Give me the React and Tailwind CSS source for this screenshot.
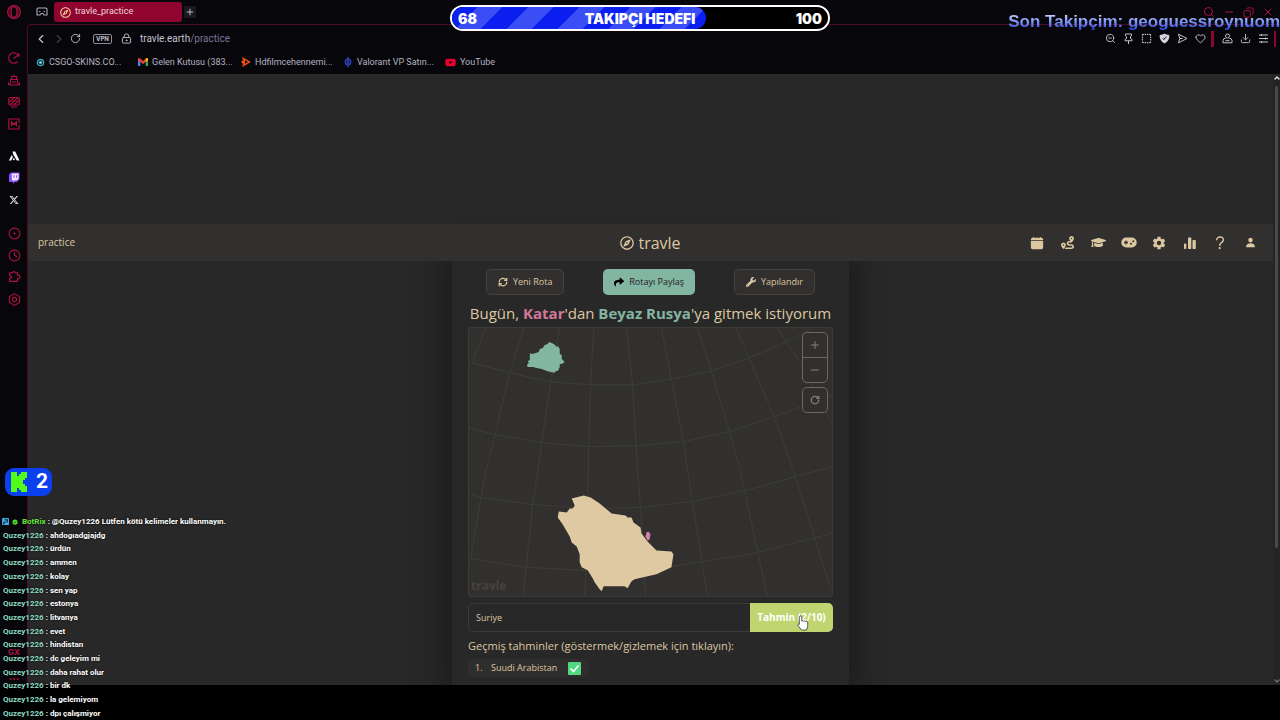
import React from "react";
import {
  CircleDot, Clock, ChevronLeft, ChevronRight,
  RotateCw, LockKeyhole, Plus, Minus, Search, X, Copy, ZoomOut, SquareDashed,
  Heart, Download, ChevronUp, ChevronDown, RefreshCw, Ellipsis,
} from "lucide-react";
import { FaRoute, FaGraduationCap, FaShare, FaWrench, FaRegCompass, FaYoutube } from "react-icons/fa";
import { FaXTwitter } from "react-icons/fa6";
import { IoCalendarClear, IoSettingsSharp, IoHelp, IoPerson, IoShieldCheckmark } from "react-icons/io5";

const chat = [
  "ahdogıadgjajdg", "ürdün", "ammen", "kolay", "sen yap", "estonya", "litvanya", "evet",
  "hindistan", "dc geleyim mi", "daha rahat olur", "bir dk", "la gelemiyom", "dpı çalışmiyor",
];

function SideButton({ label, children }) {
  return (
    <button aria-label={label} className="flex h-[22px] w-full items-center justify-center">
      {children}
    </button>
  );
}

function OperaLogo() {
  return (
    <svg viewBox="0 0 16 16" className="size-4" fill="none" stroke="#b0123f" aria-hidden="true">
      <circle cx="8" cy="8" r="6.3" strokeWidth="1.3" />
      <ellipse cx="8" cy="8" rx="3" ry="5.4" strokeWidth="1.2" />
      <path d="M5 2.8C3.4 5.5 3.4 10.500 5 13.200M11 2.800c1.600 2.700 1.600 7.700 0 10.400" strokeWidth="0.8" />
    </svg>
  );
}

function Sidebar() {
  return (
    <nav aria-label="Sidebar" className="flex w-7 shrink-0 flex-col items-center text-[#b0123f]">
      <button aria-label="Opera menu" className="mt-1 flex h-4 items-center"><OperaLogo /></button>
      <div className="mt-[27px] w-full">
        <SideButton label="Speed">
          <svg viewBox="0 0 12 12" className="size-3" fill="none" stroke="currentColor" strokeWidth="1.200">
            <path d="M8.500 1.500A5.200 5.200 0 1 0 9.500 9.800M5.500 6.500l5.500-4M8.500 1.800L11.200 2.300 10.500 5" />
          </svg>
        </SideButton>
        <SideButton label="Assistant">
          <svg viewBox="0 0 12 12" className="size-3" fill="none" stroke="currentColor" strokeWidth="1.100">
            <path d="M3.500 5V2.500h5V5M6 2.500V.5M1 11h10M2 11l.5-5.500h7L10 11M4 8h4M.5 8.500V11M11.500 8.500V11" />
          </svg>
        </SideButton>
        <SideButton label="Player">
          <svg viewBox="0 0 12 12" className="size-3" fill="none" stroke="currentColor" strokeWidth="1.200">
            <rect x=".8" y="1.500" width="10.400" height="7.500" rx="1.500" />
            <path d="M3 11h6M1.500 6L6 1.800M2.500 8.500L9.500 2M6 8.800L10.800 4.300" />
          </svg>
        </SideButton>
        <SideButton label="Mods">
          <svg viewBox="0 0 12 12" className="size-3" fill="none" stroke="currentColor" strokeWidth="1.100">
            <path d="M11.200 5V1H.8v10h10.400V7" />
            <path d="M3.700 8V4.200L6 6.500l2.300-2.300V8" strokeWidth="1.400" />
          </svg>
        </SideButton>
      </div>
      <div className="mt-[10px] w-full text-gray-200">
        <SideButton label="Aria">
          <svg viewBox="0 0 12 12" className="size-3" aria-hidden="true">
            <path d="M4.500 1.500h2.700l4.300 9H8.800L5.300 4.500zM3.800 5L5 7 3.200 10.500H.8z" fill="white" />
            <circle cx="5.800" cy="9.300" r="1" fill="white" />
          </svg>
        </SideButton>
        <SideButton label="Twitch">
          <svg viewBox="0 0 12 12" className="size-3" aria-hidden="true">
            <path d="M3 .5h8.500v6.700L8.800 10H6.700L4.800 12V10H1V2.500z" fill="#8a4dff" />
            <path d="M3.800 1.500h6.700v5.200L9 8.200H7L5.500 9.500V8.200H3.800z" fill="#f1e8ff" />
            <path d="M6 3.200v2.600M8.500 3.200v2.600" stroke="#8a4dff" strokeWidth="1" />
          </svg>
        </SideButton>
        <SideButton label="X"><FaXTwitter className="size-[10px]" /></SideButton>
      </div>
      <div className="mt-[11px] w-full">
        <SideButton label="Player"><CircleDot className="size-[13px]" strokeWidth={2} /></SideButton>
        <SideButton label="History"><Clock className="size-[13px]" strokeWidth={2} /></SideButton>
        <SideButton label="Extensions">
          <svg viewBox="0 0 13 12" className="h-3 w-[13px]" fill="none" stroke="currentColor" strokeWidth="1.200">
            <path d="M1.500 1.800h2.800c.4-1.600 2.600-1.600 3 0H9.500v2.400c3.200.2 3.200 3.400 0 3.600v2.500h-8V8l2-2-2-2z" strokeLinejoin="round" />
          </svg>
        </SideButton>
        <SideButton label="Settings">
          <svg viewBox="0 0 12 12" className="size-[13px]" fill="none" stroke="currentColor">
            <path d="M6 .6l4.700 2.700v5.400L6 11.400 1.300 8.700V3.300z" />
            <circle cx="6" cy="6" r="2" />
          </svg>
        </SideButton>
      </div>
      <div className="mt-auto flex h-10 flex-col items-center justify-between text-[8px] font-bold">
        <span className="font-['Inter',sans-serif] leading-[14px]">GX</span>
        <Ellipsis className="size-3" />
      </div>
    </nav>
  );
}

function TabStrip() {
  return (
    <div className="flex h-6 items-center text-[9px]">
      <button aria-label="Workspace" className="ml-2 flex w-3">
        <svg viewBox="0 0 12 10" className="h-[10px] w-3" fill="none" stroke="#a9a8b8" strokeWidth="1.100">
          <path d="M2 1h8l1 1v6H8L7 6.500H5L4 8H1V2z" />
          <path d="M3 4.500h1.500M7.500 4.500H9" />
        </svg>
      </button>
      <button className="ml-[6px] flex h-5 w-32 items-center gap-1 rounded-[3px] bg-[#8f0530] px-[6px] text-[#f3d5dc]">
        <FaRegCompass className="size-[11px] text-[#f5c99b]" />
        <span>travle_practice</span>
      </button>
      <button aria-label="New tab" className="ml-[2px] flex h-3 w-3 items-center justify-center bg-[#1a1922] text-gray-300">
        <Plus className="size-[10px]" />
      </button>
      <div className="ml-auto flex items-center gap-2 pr-[6px] text-[#b0123f]">
        <button aria-label="Search tabs"><Search className="size-3" /></button>
        <button aria-label="Minimize"><Minus className="size-3" /></button>
        <button aria-label="Restore"><Copy className="size-[11px] -scale-x-100" /></button>
        <button aria-label="Close"><X className="size-3" /></button>
      </div>
    </div>
  );
}

function AddressBar() {
  return (
    <div className="flex h-[27px] items-center text-[#c4c2cf]">
      <button aria-label="Back" className="ml-[6px]"><ChevronLeft className="size-[14px]" /></button>
      <button aria-label="Forward" className="ml-1 text-gray-700"><ChevronRight className="size-[14px]" /></button>
      <button aria-label="Reload" className="ml-1"><RotateCw className="size-[11px]" /></button>
      <button className="ml-3 rounded-[2px] border border-[#8b8997] px-[2px] font-['Inter',sans-serif] text-[6px] font-bold leading-[8px]">VPN</button>
      <LockKeyhole className="ml-[9px] size-[11px]" aria-hidden="true" />
      <a href="#address" className="ml-2 text-[10px]">travle.earth<span className="text-[#77749a]">/practice</span></a>
      <div className="ml-auto flex items-center gap-[7px]">
        <button aria-label="Zoom out"><ZoomOut className="size-[11px]" /></button>
        <button aria-label="Pin">
          <svg viewBox="0 0 11 11" className="size-[11px]" fill="none" stroke="currentColor"><path d="M2.500 1h6v1.800l-1 .7v2l1.500 1v1.300H2V6.500l1.500-1v-2l-1-.7zM5.500 7.800V11" /></svg>
        </button>
        <button aria-label="Snapshot"><SquareDashed className="size-[11px]" strokeWidth={2.5} /></button>
        <button aria-label="Ad blocker"><IoShieldCheckmark className="size-[11px] text-[#d5d3e2]" /></button>
        <button aria-label="Send">
          <svg viewBox="0 0 11 11" className="size-[11px]" fill="none" stroke="currentColor" strokeLinejoin="round"><path d="M1.500 1.200L10 5.500 1.500 9.800 2.800 5.500zM2.800 5.500H5.500" /></svg>
        </button>
        <button aria-label="Bookmark"><Heart className="size-[11px]" /></button>
      </div>
      <span className="ml-[5px] h-4 w-[3px] bg-[#8f0530]" />
      <div className="ml-2 flex items-center gap-[7px]">
        <button aria-label="Profile">
          <svg viewBox="0 0 11 11" className="size-[11px]" fill="none" stroke="currentColor"><circle cx="5.500" cy="3" r="2" /><path d="M3.500 5.500H2L1 7.500v2.300h9V7.500l-1-2H7.500M3.500 7.700h4" /></svg>
        </button>
        <button aria-label="Downloads"><Download className="size-[11px]" /></button>
        <button aria-label="Easy setup">
          <svg viewBox="0 0 11 11" className="size-[11px]" fill="none" stroke="currentColor"><path d="M1 2h9M1 5.500h9M1 9h9M3.500 1v2M7.500 4.500v2M3.500 8v2" /></svg>
        </button>
      </div>
      <span className="ml-[5px] mr-1 h-4 w-[2px] bg-[#8f0530]" />
    </div>
  );
}

function Bookmarks() {
  return (
    <div className="flex h-[22px] items-start pl-2 text-[9px] leading-[20px] text-[#b4b2c0]">
      <a href="#csgo" className="flex w-[102px] items-center gap-1">
        <svg viewBox="0 0 10 10" className="size-[9px]"><circle cx="5" cy="5" r="3.500" fill="#10303c" stroke="#3fa9c5" strokeWidth="1.300" /><circle cx="5" cy="5" r="1.500" fill="#8be3f5" /></svg>
        CSGO-SKINS.CO...
      </a>
      <a href="#mail" className="flex w-[103px] items-center gap-1">
        <svg viewBox="0 0 10 8" className="h-2 w-[10px]">
          <path d="M0 1v7h2.300V3z" fill="#4285f4" /><path d="M10 1v7H7.700V3z" fill="#34a853" />
          <path d="M0 1.200C0 0 1.500-.3 2.300.7L5 3 7.700.7C8.500-.3 10 0 10 1.200v1L5 6 0 2.200z" fill="#ea4335" /><path d="M7.700.7C8.500-.3 10 0 10 1.200v1L7.700 4z" fill="#fbbc04" />
        </svg>
        Gelen Kutusu (383...
      </a>
      <a href="#film" className="flex w-[102px] items-center gap-1">
        <svg viewBox="0 0 10 10" className="size-[10px]"><path d="M1 0l3 1.500 6 3.500-6 3.500L1 10l1-3-2-2 2-2z" fill="#e84e0f" /><path d="M4 3.300L7 5 4 6.700z" fill="#111" /></svg>
        Hdfilmcehennemi...
      </a>
      <a href="#valorant" className="flex w-[102px] items-center gap-1">
        <svg viewBox="0 0 10 10" className="size-[10px]" fill="none" stroke="#3042c4" strokeWidth="1.600"><path d="M5 0v10M3.700 2C2 3.500 2 6.500 3.700 8M6.300 2C8 3.500 8 6.500 6.300 8" /></svg>
        Valorant VP Satın...
      </a>
      <a href="#youtube" className="flex items-center gap-1"><FaYoutube className="size-[11px] text-[#e5002d]" />YouTube</a>
    </div>
  );
}

function GamepadIcon({ className }) {
  return (
    <svg viewBox="0 0 16 11" className={className} aria-hidden="true">
      <rect x="0.300" y="0.500" width="15.400" height="10" rx="5" fill="currentColor" />
      <path d="M5 3.500v4M3 5.500h4" stroke="#32302f" strokeWidth="1.300" />
      <circle cx="10" cy="6.800" r="1" fill="#32302f" /><circle cx="12.300" cy="4.300" r="1" fill="#32302f" />
    </svg>
  );
}

function BarsIcon({ className }) {
  return (
    <svg viewBox="0 0 12 12" className={className} fill="currentColor" aria-hidden="true">
      <rect x="0" y="6.500" width="2.300" height="5.500" rx=".7" /><rect x="4" y="0.500" width="3.300" height="11.500" rx=".7" />
      <rect x="8.500" y="3" width="3.300" height="9" rx=".7" />
    </svg>
  );
}

function SiteHeader() {
  const links = [
    ["Calendar", IoCalendarClear, "size-[14px]"], ["Routes", FaRoute, "size-[13px]"],
    ["Learn", FaGraduationCap, "size-[15px]"], ["Games", GamepadIcon, "h-[11px] w-4"],
    ["Settings", IoSettingsSharp, "size-[14px]"], ["Stats", BarsIcon, "size-[12px]"],
    ["Help", IoHelp, "size-[18px]"], ["Account", IoPerson, "size-[11px]"],
  ];
  return (
    <header className="relative z-10 grid h-[37px] shrink-0 grid-cols-[1fr_auto_1fr] items-center bg-[#32302f] px-[10px]">
      <span className="text-[10px]">practice</span>
      <h1 className="flex items-center gap-1 text-[16px] leading-6"><FaRegCompass className="size-[14px]" />travle</h1>
      <div className="ml-auto mr-[5px] flex w-[228px] justify-between">
        {links.map(([label, Icon, size]) => (
          <button key={label} aria-label={label} className="flex h-[18px] w-[14px] items-center justify-center"><Icon className={`${size} shrink-0`} /></button>
        ))}
      </div>
    </header>
  );
}

function RouteMap() {
  return (
    <div className="relative overflow-hidden rounded-[3px] border border-[#3d3b38] bg-[#32302f]">
      <svg viewBox="469 328 364 269" className="block w-full" role="img" aria-label="Map">
        <g fill="none" stroke="#3c3d39" strokeWidth="1">
          <path d="M486 328L482 338L472 363" />
          <path d="M524 328L510 373L495 435L486 471L481 498L470 563" />
          <path d="M560 328L551 382L542 443L538 471L533 505L526 570L523 597" />
          <path d="M594 328L591 385L589 447L588 510L585 597" />
          <path d="M627 328L633 385L638 471L641 508L646 597" />
          <path d="M662 328L672 379L684 442L693 502L708 597" />
          <path d="M698 328L712 371L730 432L741 471L768 597" />
          <path d="M737 328L750 358L775 417L794 470L832 590" />
          <path d="M778 328L787 342L802 363L832 422" />
          <path d="M469 362L510 373L551 382L591 385L633 385L672 379L712 371L750 358L787 342L812 329" />
          <path d="M469 428L495 435L542 443L589 447L636 446L684 442L730 432L775 417L833 395" />
          <path d="M469 494L481 498L533 505L587 509L641 508L693 502L750 490L833 467" />
          <path d="M469 559L526 568L585 571L635 571L672 567L750 555L833 534" />
        </g>
        <path fill="#83b5a3" d="M527 365l2-2-1-2 2-1v-7l2 1 4-1 3-1 1-3 3-1 2-3 3-1 1-2 3 1 2 1 3 3 1-1 2 3v5l2 1v4l3 3-3 2-2 0v3l-1 2-1 2-2 0-1 2-4-1-4-1-5-2-5-1-4-1-5 0z" />
        <path fill="#dec9a3" d="M572 499L584 496L591 498L600 504L612 514L626 516L628 518L632 518L634 523L641 528L642 534L648 542L657 551L672 552L674 555L672 568L657 575L635 580L632 582L628 589L625 587L604 587L602 592L600 590L595 583L593 579L588 571L582 568L580 563L580 555L577 547L572 543L570 537L563 525L558 518L559 512L567 513L570 509L573 509L575 506z" />
        <path fill="#d081a8" d="M647 533l2-1 2 3-1 5-2 1-2-4z" />
      </svg>
      <span className="absolute bottom-0 left-[2px] text-[12px] font-bold leading-5 text-[#45423f]">travle</span>
      <div className="absolute right-1 top-1 flex w-[26px] flex-col text-[#85827c]">
        <button aria-label="Zoom in" className="flex h-[26px] items-center justify-center rounded-t-[5px] border border-[#6c6964] bg-[#32302f]"><Plus className="size-3" strokeWidth={2} /></button>
        <button aria-label="Zoom out" className="-mt-px flex h-[26px] items-center justify-center rounded-b-[5px] border border-[#6c6964] bg-[#32302f]"><Minus className="size-3" strokeWidth={2} /></button>
        <button aria-label="Reset" className="mt-1 flex h-[26px] items-center justify-center rounded-[5px] border border-[#6c6964] bg-[#32302f]"><RotateCw className="size-[10px]" strokeWidth={3} /></button>
      </div>
    </div>
  );
}

function Game() {
  return (
    <main className="mx-auto w-full max-w-[397px] flex-1 bg-[#282828] px-4 pt-2 shadow-[0_0_28px_10px_rgba(0,0,0,0.3)]">
      <div className="flex justify-between px-[18px] text-[9px] leading-4">
        <button className="flex h-[26px] items-center gap-[5px] rounded-[5px] border border-[#45423e] bg-[#32302f] px-[11px]"><RefreshCw className="size-[10px]" strokeWidth={3} />Yeni Rota</button>
        <button className="flex h-[26px] items-center gap-[5px] rounded-[5px] bg-[#83b5a3] px-[11px] text-[#1d2021]"><FaShare className="size-[10px] text-black" />Rotayı Paylaş</button>
        <button className="flex h-[26px] items-center gap-[5px] rounded-[5px] border border-[#45423e] bg-[#32302f] px-[11px]"><FaWrench className="size-[10px]" />Yapılandır</button>
      </div>
      <h2 className="flex h-8 items-center justify-center whitespace-pre pt-1 text-[15px]">
        <span>Bugün, <b className="text-[#d3789b]">Katar</b>'dan <b className="text-[#83b5a3]">Beyaz Rusya</b>'ya gitmek istiyorum</span>
      </h2>
      <RouteMap />
      <form className="mt-[6px] flex h-[29px]" onSubmit={(e) => e.preventDefault()}>
        <input aria-label="Tahmin" defaultValue="Suriye" className="min-w-0 flex-1 rounded-l-[5px] border border-r-0 border-[#3c3a37] bg-[#282828] px-[7px] text-[9px] outline-none" />
        <button className="relative w-[83px] rounded-r-[5px] bg-[#c0d470] text-[10px] font-bold text-white">
          Tahmin (2/10)
          <svg viewBox="0 0 12 16" className="absolute left-[47px] top-3 h-4 w-3" aria-hidden="true">
            <path d="M3.500 1c.8 0 1.300.5 1.300 1.200v4l.7-.5 1 .5 1-.3 1 .6 1-.2c.8.2 1.200.7 1.200 1.500v3.500L9.500 15h-5L1 10.500c-.6-1 .3-2 1.300-1.200V2.200C2.300 1.500 2.700 1 3.500 1z" fill="white" stroke="#333" strokeWidth=".8" />
          </svg>
        </button>
      </form>
      <button className="mt-1 block text-left text-[11px] leading-5">Geçmiş tahminler (göstermek/gizlemek için tıklayın):</button>
      <ol className="mt-[3px] text-[9px] leading-[18px]">
        <li className="flex h-[18px] w-[121px] items-center rounded bg-[#302e2d] pl-[7px]">
          <span className="w-4">1.</span>
          <span className="flex-1">Suudi Arabistan</span>
          <svg viewBox="0 0 13 13" className="mr-2 size-[13px]" role="img" aria-label="Doğru"><rect width="13" height="13" rx="1" fill="#4fd981" /><path d="M2.500 6.500l3 3 5-6" fill="none" stroke="white" strokeWidth="1.600" /></svg>
        </li>
      </ol>
    </main>
  );
}

function FollowerGoal() {
  return (
    <div className="absolute inset-x-0 top-[5px] mx-auto h-[26px] w-[380px] overflow-hidden rounded-full border-2 border-white bg-black font-['Inter',sans-serif] text-[14px] font-black text-white">
      <div className="h-full w-[254px] rounded-r-full bg-[repeating-linear-gradient(135deg,#0b1ff0_0_18px,#3b4df5_18px_36px)]" />
      <div className="absolute inset-0 grid grid-cols-3 items-center px-[6px]">
        <span>68</span><span className="whitespace-nowrap text-center">TAKIPÇI HEDEFI</span><span className="text-right">100</span>
      </div>
    </div>
  );
}

function StreamChat() {
  return (
    <>
      <div className="absolute bottom-[224px] left-[5px] flex h-7 w-[47px] items-center gap-2 rounded-[9px] bg-[#0b40ef] pl-[5px] font-['Roboto',sans-serif] text-[21px] font-bold text-white">
        <svg viewBox="0 0 18 20" className="h-5 w-[18px]" aria-label="Kick" role="img"><path d="M1 0h6v4h2V2h2V0h6v6h-2v2h-2v4h2v2h2v6h-6v-2H9v-2H7v4H1z" fill="#53fc18" /></svg>
        2
      </div>
      <div className="absolute bottom-0 left-[3px] flex h-[205px] flex-col justify-between whitespace-pre font-['Roboto',sans-serif] text-[8px] font-bold leading-[13px] text-white [text-shadow:0_0_2px_black]">
        <p className="flex items-center">
          <svg viewBox="0 0 8 8" className="-ml-px mr-[3px] size-[7px]"><rect width="8" height="8" rx="1" fill="#42a9e8" /><path d="M1 7l3-3M3 2h3v3" stroke="#123" strokeWidth="1.400" fill="none" /></svg>
          <svg viewBox="0 0 8 8" className="mr-1 size-[6px]"><circle cx="4" cy="4" r="3.500" fill="#53dc28" /><path d="M2 4l1.500 1.500L6 2.700" stroke="#143" fill="none" /></svg>
          <span className="text-[#66e63e]">BotRix</span> : @Quzey1226 Lütfen kötü kelimeler kullanmayın.
        </p>
        {chat.map((text) => (
          <p key={text}><span className="text-[#8fdcc3]">Quzey1226</span> : {text}</p>
        ))}
      </div>
    </>
  );
}

export default function App() {
  return (
    <div className="relative flex h-screen flex-col overflow-hidden bg-black pb-[35px]">
      <div className="flex min-h-0 flex-1 bg-[#07070b] font-['Roboto',sans-serif]">
        <Sidebar />
        <div className="flex min-w-0 flex-1 flex-col">
          <TabStrip />
          <div className="-ml-px flex min-h-0 flex-1 flex-col rounded-tl border-l border-t border-[#4d0b21]">
            <AddressBar />
            <Bookmarks />
            <div className="flex min-h-0 flex-1 bg-[#282828]">
              <div className="flex min-w-0 flex-1 flex-col overflow-hidden pt-[150px] font-['Open_Sans',sans-serif] text-[#ddc7a1]">
                <SiteHeader />
                <Game />
              </div>
              <div className="flex w-[7px] shrink-0 flex-col items-center bg-[#242424] text-gray-200">
                <ChevronUp className="size-2 shrink-0" strokeWidth={4} />
                <div className="mt-1 h-[462px] w-[3px] rounded bg-[#49494b]" />
                <ChevronDown className="mt-auto size-2 shrink-0 text-gray-500" strokeWidth={4} />
              </div>
            </div>
          </div>
        </div>
      </div>
      <FollowerGoal />
      <p className="absolute right-0 top-[10px] whitespace-nowrap bg-linear-to-b from-[#c9cbfa] from-20% to-[#1c2fe8] to-90% bg-clip-text font-['Liberation_Sans',sans-serif] text-[17px] font-bold leading-6 text-transparent">
        Son Takipçim: geoguessroynuom
      </p>
      <StreamChat />
    </div>
  );
}
